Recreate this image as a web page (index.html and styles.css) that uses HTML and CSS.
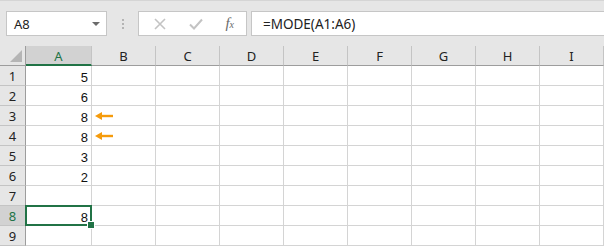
FILE: index.html
```html
<!DOCTYPE html>
<html lang="en">
<head>
  <meta charset="UTF-8">
  <title>MODE</title>
  <link rel="stylesheet" href="styles.css">
</head>
<body>
  <div class="formula-bar">
    <div class="name-box">
      <span>A8</span>
      <span class="caret"></span>
    </div>
    <div class="grip"><i></i><i></i><i></i></div>
    <div class="fx-buttons">
      <svg class="btn-icon" width="12" height="12" viewBox="0 0 12 12"><path d="M1 1L11 11M11 1L1 11" stroke="#c3c3c3" stroke-width="1.6" fill="none"/></svg>
      <svg class="btn-icon" width="14" height="12" viewBox="0 0 14 12"><path d="M1 6.5L5 10.5L13 1.5" stroke="#c3c3c3" stroke-width="2" fill="none"/></svg>
      <span class="fx">f<sub>x</sub></span>
    </div>
    <div class="formula-input">=MODE(A1:A6)</div>
  </div>

  <div class="sheet" id="sheet"></div>

  <script>
    // values in column A, row number -> value
    const values = { 1: 5, 2: 6, 3: 8, 4: 8, 5: 3, 6: 2, 8: 8 };
    const arrows = [3, 4];
    const cols = ["A", "B", "C", "D", "E", "F", "G", "H", "I"];
    const activeRow = 8;

    const sheet = document.getElementById("sheet");

    function cell(cls, text) {
      const div = document.createElement("div");
      div.className = cls;
      if (text !== undefined) div.textContent = text;
      sheet.appendChild(div);
      return div;
    }

    // header row
    const corner = cell("hd corner");
    corner.appendChild(document.createElement("span"));
    cols.forEach(c => cell(c === "A" ? "hd col active" : "hd col", c));

    // rows 1..9
    for (let r = 1; r <= 9; r++) {
      cell(r === activeRow ? "hd row active" : "hd row", r);
      cols.forEach(c => {
        const div = cell("cell");
        if (c === "A" && values[r] !== undefined) div.textContent = values[r];
        if (c === "A" && r === activeRow) {
          div.classList.add("selected");
          const handle = document.createElement("span");
          handle.className = "handle";
          div.appendChild(handle);
        }
        if (c === "B" && arrows.includes(r)) {
          div.classList.add("note");
          div.innerHTML = '<svg width="18" height="8" viewBox="0 0 18 8"><path d="M0 4L7 0V8Z" fill="#f59b0c"/><rect x="6" y="2.8" width="12" height="2.4" fill="#f59b0c"/></svg>';
        }
      });
    }
  </script>
</body>
</html>
```

FILE: styles.css
```css
body {
  margin: 0;
  background: #ffffff;
  font-family: "Liberation Sans", Arial, sans-serif;
  overflow: hidden;
}

/* formula bar */
.formula-bar {
  display: flex;
  align-items: flex-start;
  height: 46px;
  box-sizing: border-box;
  padding: 10px 0 0 6px;
  background: #e6e6e6;
  border-top: 1px solid #d5d5d5;
}

.name-box {
  display: flex;
  align-items: center;
  justify-content: space-between;
  width: 101px;
  height: 25px;
  box-sizing: border-box;
  padding: 0 6px 0 7px;
  background: #fff;
  border: 1px solid #c6c6c6;
  font-family: "Noto Sans", sans-serif;
  font-size: 13px;
  color: #222;
}

.caret {
  width: 0;
  height: 0;
  border-left: 4px solid transparent;
  border-right: 4px solid transparent;
  border-top: 4px solid #6b6b6b;
}

.grip {
  width: 31px;
  height: 25px;
  display: flex;
  flex-direction: column;
  align-items: center;
  justify-content: center;
  gap: 2px;
}

.grip i {
  display: block;
  width: 2px;
  height: 2px;
  background: #b4b4b4;
}

.fx-buttons {
  display: flex;
  align-items: center;
  justify-content: space-between;
  width: 109px;
  height: 25px;
  box-sizing: border-box;
  padding: 0 12px 0 15px;
  background: #fff;
  border: 1px solid #c6c6c6;
}

.fx {
  font-family: "Liberation Serif", "Times New Roman", serif;
  font-style: italic;
  font-size: 15px;
  color: #6a6a6a;
  line-height: 1;
}

.fx sub {
  font-size: 10px;
  vertical-align: 0;
}

.formula-input {
  flex: 1;
  height: 25px;
  margin-left: 4px;
  box-sizing: border-box;
  padding: 3px 0 0 11px;
  background: #fff;
  border: 1px solid #c6c6c6;
  border-right: none;
  font-family: "Noto Sans", sans-serif;
  font-size: 13.5px;
  color: #222;
}

/* grid */
.sheet {
  display: grid;
  grid-template-columns: 26px 66px repeat(8, 64px);
  grid-auto-rows: 20px;
}

.hd {
  display: flex;
  align-items: center;
  justify-content: center;
  box-sizing: border-box;
  background: #e6e6e6;
  font-family: "Noto Sans", sans-serif;
  font-size: 13px;
  color: #222;
}

.hd.col {
  border-bottom: 1px solid #9d9d9d;
  border-right: 1px solid #c4c4c4;
  padding-top: 1px;
}

.hd.col.active {
  background: #d2d2d2;
  color: #217346;
  border-bottom: 2px solid #217346;
}

.hd.corner {
  align-items: flex-end;
  justify-content: flex-end;
  padding: 0 3px 3px 0;
  border-bottom: 1px solid #9d9d9d;
  border-right: 1px solid #9d9d9d;
}

.hd.corner span {
  width: 0;
  height: 0;
  border-left: 12px solid transparent;
  border-bottom: 12px solid #b5b5b5;
}

.hd.row {
  border-right: 1px solid #9d9d9d;
  border-bottom: 1px solid #c4c4c4;
}

.hd.row.active {
  background: #d2d2d2;
  color: #217346;
}

.cell {
  position: relative;
  display: flex;
  align-items: flex-end;
  justify-content: flex-end;
  box-sizing: border-box;
  padding: 0 3px 1px 0;
  border-right: 1px solid #d4d4d4;
  border-bottom: 1px solid #d4d4d4;
  font-size: 13px;
  line-height: 1;
  color: #111;
}

.cell.note {
  justify-content: flex-start;
  align-items: center;
  padding: 1px 0 0 3px;
}

.cell.note svg {
  display: block;
}

.cell.selected::after {
  content: "";
  position: absolute;
  top: -1px;
  left: -1px;
  right: -1px;
  bottom: -1px;
  border: 2px solid #217346;
}

.handle {
  position: absolute;
  right: -4px;
  bottom: -4px;
  width: 6px;
  height: 6px;
  background: #217346;
  border: 1px solid #fff;
  z-index: 1;
}
```
